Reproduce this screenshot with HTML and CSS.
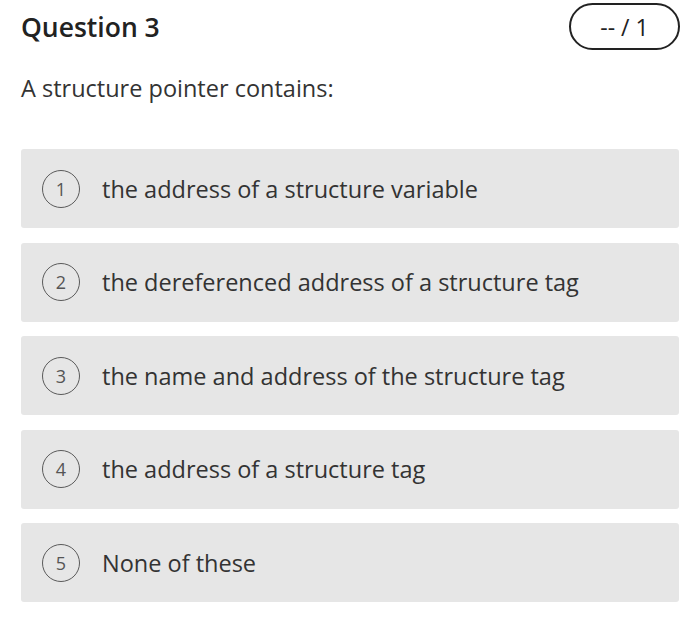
FILE: index.html
```html
<!DOCTYPE html>
<html lang="en">
<head>
  <meta charset="UTF-8" />
  <title>Question 3</title>
  <link rel="stylesheet" href="styles.css">
</head>
<body>
  <div class="question">
    <header class="q-head">
      <h2>Question 3</h2>
      <span class="score">-- / 1</span>
    </header>

    <p class="q-text">A structure pointer contains:</p>

    <ul class="answers">
      <li class="answer"><span class="num">1</span>the address of a structure variable</li>
      <li class="answer"><span class="num">2</span>the dereferenced address of a structure tag</li>
      <li class="answer"><span class="num">3</span>the name and address of the structure tag</li>
      <li class="answer"><span class="num">4</span>the address of a structure tag</li>
      <li class="answer"><span class="num">5</span>None of these</li>
    </ul>
  </div>
</body>
</html>
```

FILE: styles.css
```css
body {
  font-family: "Open Sans", Arial, sans-serif;
  margin: 0; padding: 0;
  background: #fff;
  color: #333;
}
.question {
  padding: 3px 21px 0 21px;
}
.q-head {
  display: flex;
  justify-content: space-between;
  align-items: center;
}
.q-head h2 {
  margin: 0;
  font-size: 26.5px;
  font-weight: 600;
  color: #222;
}
.score {
  width: 111px;
  height: 47px;
  box-sizing: border-box;
  border: 2px solid #222;
  border-radius: 24px;
  display: flex;
  align-items: center;
  justify-content: center;
  font-size: 23px;
  color: #222;
  margin-right: -1px;
}
.q-text {
  margin: 22px 0 0 0;
  font-size: 23.5px;
  line-height: 32px;
}
.answers {
  list-style: none;
  margin: 45px 0 0 0;
  padding: 0;
  display: flex;
  flex-direction: column;
  gap: 14.5px;
}
.answer {
  display: flex;
  align-items: center;
  height: 79px;
  padding-left: 21px;
  background: #e6e6e6;
  border-radius: 3px;
  font-size: 23.5px;
}
.num {
  width: 38px;
  height: 38px;
  box-sizing: border-box;
  border: 1.5px solid #5a5a5a;
  border-radius: 50%;
  display: flex;
  align-items: center;
  justify-content: center;
  font-size: 18px;
  color: #555;
  margin-right: 22px;
  flex-shrink: 0;
}
```
